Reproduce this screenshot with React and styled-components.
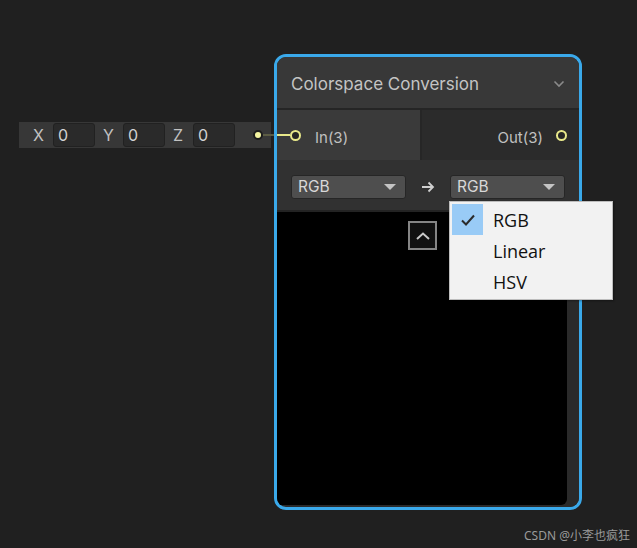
import React from 'react';
import styled, { createGlobalStyle } from 'styled-components';

const GlobalStyle = createGlobalStyle`
  html, body {
    margin: 0;
    padding: 0;
    background: #202020;
  }
  body {
    font-family: Inter, "Noto Sans", sans-serif;
  }
`;

const menuItems = ['RGB', 'Linear', 'HSV'];

const App = () => {
  return (
    <>
      <GlobalStyle />
      <Canvas>
        <VectorField>
          <AxisLabel>X</AxisLabel>
          <NumberBox>0</NumberBox>
          <AxisLabel>Y</AxisLabel>
          <NumberBox>0</NumberBox>
          <AxisLabel>Z</AxisLabel>
          <NumberBox>0</NumberBox>
          <OutDot />
          <Wire />
        </VectorField>

        <Node>
          <Header>
            <Title>Colorspace Conversion</Title>
            <svg width="12" height="8" viewBox="0 0 12 8">
              <path d="M1.5 1.5 L6 6 L10.5 1.5" fill="none" stroke="#8a8a8a" strokeWidth="1.6" />
            </svg>
          </Header>
          <Ports>
            <InputPort>
              <Stub />
              <PortRing />
              <PortLabel>In(3)</PortLabel>
            </InputPort>
            <OutputPort>
              <PortLabel $right>Out(3)</PortLabel>
              <PortRing />
            </OutputPort>
          </Ports>
          <Controls>
            <Dropdown>
              RGB
              <Caret />
            </Dropdown>
            <ArrowGlyph>
              <svg width="14" height="12" viewBox="0 0 14 12">
                <path d="M1 6 H12 M7.5 1.5 L12 6 L7.5 10.5" fill="none" stroke="#d0d0d0" strokeWidth="1.8" />
              </svg>
            </ArrowGlyph>
            <Dropdown>
              RGB
              <Caret />
            </Dropdown>
          </Controls>
          <PreviewWrap>
            <Preview>
              <CollapseButton>
                <svg width="16" height="10" viewBox="0 0 16 10">
                  <path d="M2 8 L8 2.5 L14 8" fill="none" stroke="#c8c8c8" strokeWidth="2" />
                </svg>
              </CollapseButton>
            </Preview>
            <Gutter />
          </PreviewWrap>
        </Node>

        <Menu>
          {menuItems.map((item, i) => (
            <MenuItem key={item}>
              <CheckCell $active={i === 0}>
                {i === 0 && (
                  <svg width="16" height="14" viewBox="0 0 16 14">
                    <path d="M2 7.5 L6 11.5 L14 2.5" fill="none" stroke="#2b2b2b" strokeWidth="2" />
                  </svg>
                )}
              </CheckCell>
              <MenuText>{item}</MenuText>
            </MenuItem>
          ))}
        </Menu>

        <Watermark>CSDN @小李也疯狂</Watermark>
      </Canvas>
    </>
  );
};

// Styled components
const Canvas = styled.div`
  position: relative;
  width: 637px;
  height: 548px;
  overflow: hidden;
  background: #202020;
`;

const VectorField = styled.div`
  position: absolute;
  left: 19px;
  top: 122px;
  width: 252px;
  height: 26px;
  box-sizing: border-box;
  display: flex;
  align-items: center;
  padding-left: 14px;
  background: #373737;
`;

const AxisLabel = styled.span`
  width: 20px;
  font-size: 16px;
  color: #c2c2c2;
`;

const NumberBox = styled.span`
  width: 42px;
  height: 24px;
  box-sizing: border-box;
  margin-right: 8px;
  padding-left: 4px;
  display: flex;
  align-items: center;
  font-size: 16px;
  color: #d2d2d2;
  background: #2a2a2a;
  border: 1px solid #212121;
  border-radius: 3px;
`;

const OutDot = styled.span`
  margin-left: 10px;
  width: 6px;
  height: 6px;
  flex-shrink: 0;
  border-radius: 50%;
  background: #f4f4a0;
  border: 2px solid #1c1c1c;
`;

const Wire = styled.span`
  flex: 1;
  height: 2px;
  margin-right: -4px;
  background: #5c5c44;
`;

const Node = styled.div`
  position: absolute;
  left: 274px;
  top: 54px;
  width: 308px;
  height: 456px;
  box-sizing: border-box;
  border: 3px solid #3aa9ea;
  border-radius: 12px;
  background: #2a2a2a;
  display: flex;
  flex-direction: column;
  overflow: hidden;
`;

const Header = styled.div`
  height: 53px;
  flex-shrink: 0;
  box-sizing: border-box;
  display: flex;
  align-items: center;
  justify-content: space-between;
  padding: 2px 14px 0 14px;
  background: #383838;
  border-bottom: 2px solid #252525;
`;

const Title = styled.span`
  font-size: 17px;
  color: #c4c4c4;
`;

const Ports = styled.div`
  height: 50px;
  flex-shrink: 0;
  display: flex;
`;

const InputPort = styled.div`
  width: 143px;
  display: flex;
  align-items: center;
  background: #3a3a3a;
  border-right: 2px solid #262626;
`;

const OutputPort = styled.div`
  flex: 1;
  display: flex;
  align-items: center;
  justify-content: flex-end;
  gap: 13px;
  padding-right: 12px;
  background: #2b2b2b;
`;

const Stub = styled.span`
  width: 13px;
  height: 2px;
  background: #e8e88a;
`;

const PortRing = styled.span`
  width: 7px;
  height: 7px;
  border-radius: 50%;
  border: 2px solid #e8e88a;
  background: #262626;
`;

const PortLabel = styled.span`
  font-size: 15px;
  color: #c0c0c0;
  margin-left: ${p => (p.$right ? '0' : '14px')};
  padding-top: 4px;
`;

const Controls = styled.div`
  height: 52px;
  flex-shrink: 0;
  box-sizing: border-box;
  display: flex;
  align-items: center;
  padding: 3px 14px 0 14px;
  gap: 15px;
  background: #313131;
  border-bottom: 2px solid #232323;
`;

const Dropdown = styled.div`
  flex: 1;
  height: 24px;
  box-sizing: border-box;
  display: flex;
  align-items: center;
  justify-content: space-between;
  padding: 0 9px 0 6px;
  font-size: 15.5px;
  color: #d8d8d8;
  background: #4e4e4e;
  border: 1px solid #262626;
  border-radius: 3px;
`;

const Caret = styled.span`
  width: 0;
  height: 0;
  border-left: 6px solid transparent;
  border-right: 6px solid transparent;
  border-top: 6px solid #c4c4c4;
`;

const ArrowGlyph = styled.span`
  display: flex;
  align-items: center;
`;

const PreviewWrap = styled.div`
  flex: 1;
  display: flex;
`;

const Preview = styled.div`
  flex: 1;
  position: relative;
  background: #000;
  border-bottom-right-radius: 6px;
  margin-bottom: 2px;
`;

const Gutter = styled.div`
  width: 12px;
  background: #2a2a2a;
`;

const CollapseButton = styled.div`
  position: absolute;
  left: 131px;
  top: 9px;
  width: 29px;
  height: 29px;
  box-sizing: border-box;
  display: flex;
  align-items: center;
  justify-content: center;
  border: 2px solid #858585;
  background: #111;
`;

const Menu = styled.div`
  position: absolute;
  left: 449px;
  top: 201px;
  width: 164px;
  height: 99px;
  box-sizing: border-box;
  padding: 2px 0;
  background: #f2f2f2;
  border: 1px solid #bdbdbd;
  box-shadow: 1px 1px 2px rgba(0, 0, 0, 0.35);
`;

const MenuItem = styled.div`
  height: 31px;
  display: flex;
  align-items: center;
  padding-left: 2px;
`;

const CheckCell = styled.div`
  width: 31px;
  height: 31px;
  display: flex;
  align-items: center;
  justify-content: center;
  background: ${p => (p.$active ? '#99cbf6' : 'transparent')};
`;

const MenuText = styled.span`
  margin-left: 10px;
  font-family: "Open Sans", "Noto Sans", sans-serif;
  font-size: 18px;
  color: #111;
`;

const Watermark = styled.div`
  position: absolute;
  right: 7px;
  bottom: 4px;
  font-family: "Noto Sans", "Noto Sans CJK SC", sans-serif;
  font-size: 12px;
  color: #9a9a9a;
`;

export default App;
